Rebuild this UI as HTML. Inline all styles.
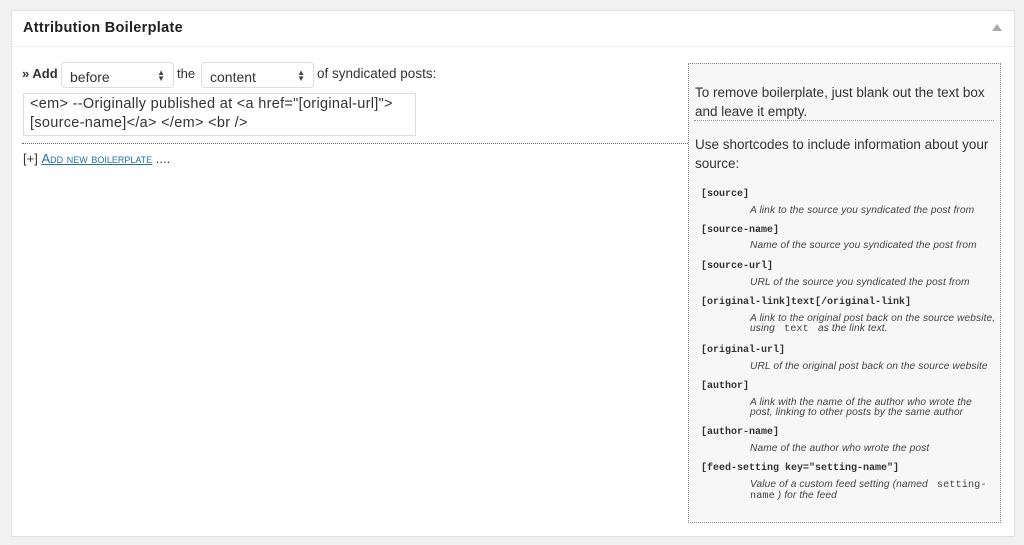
<!DOCTYPE html>
<html><head><style>
body{margin:0;width:1024px;height:545px;background:#f1f1f1;font-family:"Liberation Sans",sans-serif;position:relative;overflow:hidden;color:#333}
.a{position:absolute}
#panel{left:11px;top:10px;width:1004px;height:527px;background:#fff;border:1px solid #e2e2e2;box-sizing:border-box}
.sel{background:#fff;border:1px solid #ddd;border-radius:4px;box-sizing:border-box;font-size:14px;color:#333;padding:6px 8px}
.arr{position:absolute;right:8px;top:7px;font-size:8px;line-height:6px;color:#444}
.m{font-family:"Liberation Mono",monospace;font-weight:bold;font-size:10px;color:#333;left:701px}
.d{font-style:italic;font-size:10.2px;color:#444;left:750px;line-height:10px;letter-spacing:0.1px}
.t{font-size:13.5px;left:695px;color:#333}
</style></head><body>
<div class="a" id="panel"></div>
<div class="a" style="left:12px;top:46px;width:1002px;border-top:1px solid #eee"></div>
<div class="a" style="left:23px;top:20px;font-size:14.5px;font-weight:bold;color:#222;letter-spacing:0.3px">Attribution Boilerplate</div>
<div class="a" style="left:992px;top:24px;width:0;height:0;border-left:5px solid transparent;border-right:5px solid transparent;border-bottom:7px solid #aaa"></div>

<div class="a" style="left:22px;top:66px;font-size:13px;font-weight:bold;color:#333">» Add</div>
<div class="a sel" style="left:61px;top:62px;width:113px;height:26px">before<div class="arr">▲<br>▼</div></div>
<div class="a" style="left:177px;top:66px;font-size:13px">the</div>
<div class="a sel" style="left:201px;top:62px;width:113px;height:26px">content<div class="arr">▲<br>▼</div></div>
<div class="a" style="left:317px;top:66px;font-size:13.5px">of syndicated posts:</div>
<div class="a" style="left:23px;top:93px;width:393px;height:43px;border:1px solid #ddd;box-sizing:border-box;font-size:14.5px;line-height:19px;padding:1px 6px;color:#333;white-space:nowrap;letter-spacing:0.3px">&lt;em&gt; --Originally published at &lt;a href="[original-url]"&gt;<br>[source-name]&lt;/a&gt; &lt;/em&gt; &lt;br /&gt;</div>
<div class="a" style="left:22px;top:143px;width:978px;border-top:1px dotted #666"></div>
<div class="a" style="left:23px;top:151px;font-size:13px;color:#333">[+] <span style="color:#21759b;text-decoration:underline;font-variant:small-caps">Add new boilerplate</span> ....</div>

<div class="a" style="left:688px;top:63px;width:313px;height:460px;border:1px dotted #888;background:#f7f7f7;box-sizing:border-box"></div>
<div class="a t" style="top:83px;line-height:19px">To remove boilerplate, just blank out the text box<br>and leave it empty.</div>
<div class="a" style="left:694px;top:120px;width:300px;border-top:1px dotted #999"></div>
<div class="a t" style="top:135px;line-height:19px">Use shortcodes to include information about your<br>source:</div>
<div class="a m" style="top:189px">[source]</div>
<div class="a d" style="top:206px">A link to the source you syndicated the post from</div>
<div class="a m" style="top:225px">[source-name]</div>
<div class="a d" style="top:241px">Name of the source you syndicated the post from</div>
<div class="a m" style="top:261px">[source-url]</div>
<div class="a d" style="top:278px">URL of the source you syndicated the post from</div>
<div class="a m" style="top:297px">[original-link]text[/original-link]</div>
<div class="a d" style="top:314px">A link to the original post back on the source website,<br>using <span style="font-family:'Liberation Mono',monospace;font-style:normal">&nbsp;text&nbsp;</span> as the link text.</div>
<div class="a m" style="top:345px">[original-url]</div>
<div class="a d" style="top:362px">URL of the original post back on the source website</div>
<div class="a m" style="top:381px">[author]</div>
<div class="a d" style="top:398px">A link with the name of the author who wrote the<br>post, linking to other posts by the same author</div>
<div class="a m" style="top:427px">[author-name]</div>
<div class="a d" style="top:444px">Name of the author who wrote the post</div>
<div class="a m" style="top:463px">[feed-setting key="setting-name"]</div>
<div class="a d" style="top:480px">Value of a custom feed setting (named <span style="font-family:'Liberation Mono',monospace;font-style:normal">&nbsp;setting-</span><br><span style="font-family:'Liberation Mono',monospace;font-style:normal">name</span> ) for the feed</div>
</body></html>
